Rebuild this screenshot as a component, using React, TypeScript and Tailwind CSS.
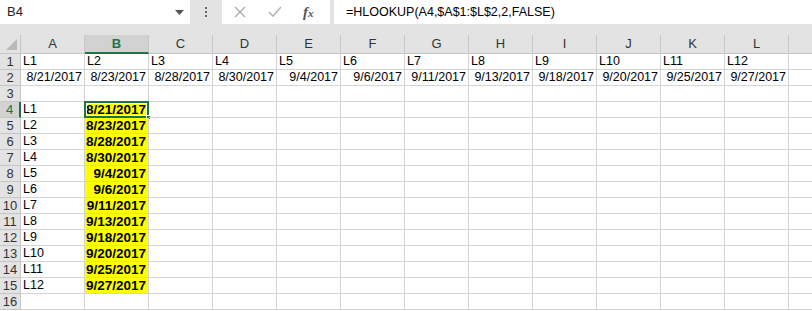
import React from "react";

const cols = ["A", "B", "C", "D", "E", "F", "G", "H", "I", "J", "K", "L"];
const dates = [
  "8/21/2017",
  "8/23/2017",
  "8/28/2017",
  "8/30/2017",
  "9/4/2017",
  "9/6/2017",
  "9/11/2017",
  "9/13/2017",
  "9/18/2017",
  "9/20/2017",
  "9/25/2017",
  "9/27/2017",
];

const font = { fontFamily: '"Liberation Sans", Arial, sans-serif' };

function cellValue(row: number, col: number): { text: string; align: "left" | "right"; hl?: boolean } | null {
  if (row === 1) return { text: `L${col + 1}`, align: "left" };
  if (row === 2) return { text: dates[col], align: "right" };
  if (row >= 4 && row <= 15) {
    if (col === 0) return { text: `L${row - 3}`, align: "left" };
    if (col === 1) return { text: dates[row - 4], align: "right", hl: true };
  }
  return null;
}

function FormulaBar() {
  return (
    <div className="flex h-6 bg-[#e4e3e4]">
      <div className="flex w-[190px] items-center justify-between bg-white pl-[7px] pr-[6px] text-[13px] text-[#222]">
        <span>B4</span>
        <svg width="9" height="5" viewBox="0 0 9 5">
          <path d="M0 0h9L4.5 5z" fill="#555" />
        </svg>
      </div>
      <div className="flex w-8 flex-col items-center justify-center gap-[2px]">
        <span className="h-[2px] w-[2px] bg-[#666]" />
        <span className="h-[2px] w-[2px] bg-[#666]" />
        <span className="h-[2px] w-[2px] bg-[#666]" />
      </div>
      <div className="flex w-[108px] items-center bg-white">
        <svg className="ml-[12px]" width="12" height="12" viewBox="0 0 12 12">
          <path d="M1 1l10 10M11 1L1 11" stroke="#aaa" strokeWidth="1.3" fill="none" />
        </svg>
        <svg className="ml-[22px]" width="14" height="12" viewBox="0 0 14 12">
          <path d="M1 6l4 4 8-9" stroke="#b5b5b5" strokeWidth="1.6" fill="none" />
        </svg>
        <span
          className="ml-[21px] text-[15px] font-bold italic text-[#555]"
          style={{ fontFamily: '"Liberation Serif", "Times New Roman", serif' }}
        >
          f<span className="text-[11px]">x</span>
        </span>
      </div>
      <div className="ml-1 flex flex-1 items-center bg-white pl-[12px] text-[12.5px] text-black">
        =HLOOKUP(A4,$A$1:$L$2,2,FALSE)
      </div>
    </div>
  );
}

export default function App() {
  const rows = Array.from({ length: 16 }, (_, i) => i + 1);
  return (
    <div className="h-[311px] w-[812px] overflow-hidden bg-white" style={font}>
      <FormulaBar />
      <div className="h-[11px] bg-[#e4e3e4]" />
      <div className="grid grid-cols-[21px_repeat(12,64px)_1fr]">
        {/* column headers */}
        <div className="relative h-[19px] border-r border-b border-[#c6c6c6] bg-[#e4e3e4]">
          <svg className="absolute bottom-[3px] right-[3px]" width="11" height="11" viewBox="0 0 11 11">
            <path d="M11 0v11H0z" fill="#b9b9b9" />
          </svg>
        </div>
        {cols.map(c =>
          c === "B" ? (
            <div
              key={c}
              className="flex h-[19px] items-center justify-center border-r border-b-2 border-r-[#c6c6c6] border-b-[#217346] bg-[#d2d2d2] text-[13px] font-bold text-[#217346]"
            >
              {c}
            </div>
          ) : (
            <div
              key={c}
              className="flex h-[19px] items-center justify-center border-r border-b border-[#c6c6c6] bg-[#e4e3e4] text-[13px] text-[#333]"
            >
              {c}
            </div>
          )
        )}
        <div className="h-[19px] border-b border-[#c6c6c6] bg-[#e4e3e4]" />

        {rows.map(r => (
          <React.Fragment key={r}>
            <div
              className={
                r === 4
                  ? "flex h-4 items-center justify-center border-r-2 border-b border-r-[#217346] border-b-[#c6c6c6] bg-[#d2d2d2] text-[13px] text-[#217346]"
                  : "flex h-4 items-center justify-center border-r border-b border-[#c6c6c6] bg-[#e4e3e4] text-[13px] text-[#333]"
              }
            >
              {r}
            </div>
            {cols.map((c, ci) => {
              const v = cellValue(r, ci);
              const selected = r === 4 && ci === 1;
              return (
                <div
                  key={c}
                  className={
                    "relative flex h-4 items-center overflow-visible whitespace-nowrap border-r border-b border-[#d4d4d4] px-[2px] " +
                    (v?.hl ? "bg-[#ffff00] font-bold text-[13.5px] " : "text-[12.5px] ") +
                    (v?.align === "right" ? "justify-end" : "justify-start")
                  }
                >
                  {v ? <span className="leading-none text-black">{v.text}</span> : null}
                  {selected ? (
                    <>
                      <div className="pointer-events-none absolute -top-[1px] -left-[1px] -right-[1px] -bottom-[1px] border-2 border-[#217346]">
                        <div className="h-full w-full border border-white" />
                      </div>
                      <div className="absolute -right-[3px] -bottom-[3px] h-[5px] w-[5px] border border-white bg-[#217346]" />
                    </>
                  ) : null}
                </div>
              );
            })}
            <div className="h-4 border-b border-[#d4d4d4]" />
          </React.Fragment>
        ))}
      </div>
    </div>
  );
}
